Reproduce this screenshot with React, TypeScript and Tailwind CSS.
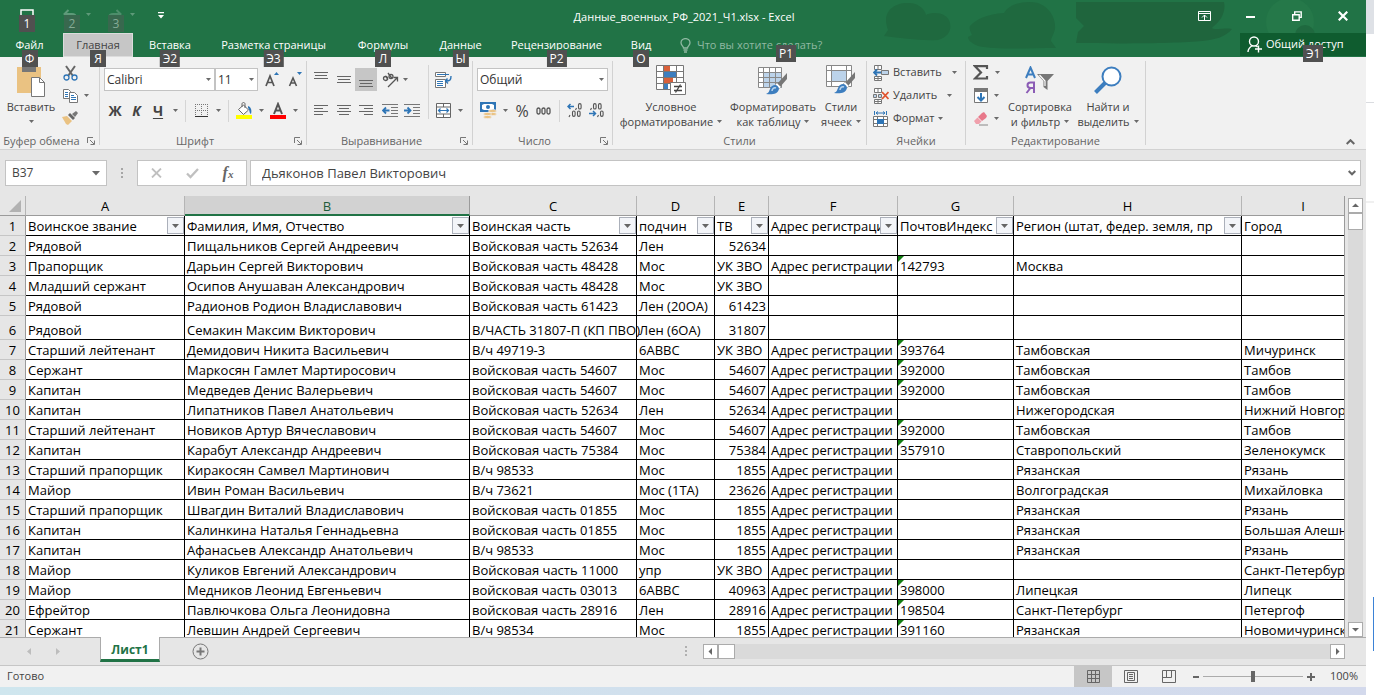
import React, { useState } from "react";

const letters = ["A", "B", "C", "D", "E", "F", "G", "H", "I"];

const headings = [
  "Воинское звание",
  "Фамилия, Имя, Отчество",
  "Воинская часть",
  "подчин",
  "ТВ",
  "Адрес регистрации",
  "ПочтовИндекс",
  "Регион (штат, федер. земля, пр",
  "Город",
];

const addr = "Адрес регистрации";

const rows: string[][] = [
  ["Рядовой", "Пищальников Сергей Андреевич", "Войсковая часть 52634", "Лен", "52634", "", "", "", ""],
  ["Прапорщик", "Дарьин Сергей Викторович", "Войсковая часть 48428", "Мос", "УК ЗВО", addr, "142793", "Москва", ""],
  ["Младший сержант", "Осипов Анушаван Александрович", "Войсковая часть 48428", "Мос", "УК ЗВО", "", "", "", ""],
  ["Рядовой", "Радионов Родион Владиславович", "Войсковая часть 61423", "Лен (20ОА)", "61423", "", "", "", ""],
  ["Рядовой", "Семакин Максим Викторович", "В/ЧАСТЬ 31807-П (КП ПВО)", "Лен (6ОА)", "31807", "", "", "", ""],
  ["Старший лейтенант", "Демидович Никита Васильевич", "В/ч 49719-3", "6АВВС", "УК ЗВО", addr, "393764", "Тамбовская", "Мичуринск"],
  ["Сержант", "Маркосян Гамлет Мартиросович", "войсковая часть 54607", "Мос", "54607", addr, "392000", "Тамбовская", "Тамбов"],
  ["Капитан", "Медведев Денис Валерьевич", "войсковая часть 54607", "Мос", "54607", addr, "392000", "Тамбовская", "Тамбов"],
  ["Капитан", "Липатников Павел Анатольевич", "Войсковая часть 52634", "Лен", "52634", addr, "", "Нижегородская", "Нижний Новгород"],
  ["Старший лейтенант", "Новиков Артур Вячеславович", "войсковая часть 54607", "Мос", "54607", addr, "392000", "Тамбовская", "Тамбов"],
  ["Капитан", "Карабут Александр Андреевич", "Войсковая часть 75384", "Мос", "75384", addr, "357910", "Ставропольский", "Зеленокумск"],
  ["Старший прапорщик", "Киракосян Самвел Мартинович", "В/ч 98533", "Мос", "1855", addr, "", "Рязанская", "Рязань"],
  ["Майор", "Ивин Роман Васильевич", "В/ч 73621", "Мос (1ТА)", "23626", addr, "", "Волгоградская", "Михайловка"],
  ["Старший прапорщик", "Швагдин Виталий Владиславович", "войсковая часть 01855", "Мос", "1855", addr, "", "Рязанская", "Рязань"],
  ["Капитан", "Калинкина Наталья Геннадьевна", "войсковая часть 01855", "Мос", "1855", addr, "", "Рязанская", "Большая Алешня"],
  ["Капитан", "Афанасьев Александр Анатольевич", "В/ч 98533", "Мос", "1855", addr, "", "Рязанская", "Рязань"],
  ["Майор", "Куликов Евгений Александрович", "Войсковая часть 11000", "упр", "УК ЗВО", addr, "", "", "Санкт-Петербург"],
  ["Майор", "Медников Леонид Евгеньевич", "войсковая часть 03013", "6АВВС", "40963", addr, "398000", "Липецкая", "Липецк"],
  ["Ефрейтор", "Павлючкова Ольга Леонидовна", "войсковая часть 28916", "Лен", "28916", addr, "198504", "Санкт-Петербург", "Петергоф"],
  ["Сержант", "Левшин Андрей Сергеевич", "В/ч 98534", "Мос", "1855", addr, "391160", "Рязанская", "Новомичуринск"],
];

const tabs = [
  { label: "Файл", tip: "Ф", width: "w-[59px] mr-1" },
  { label: "Главная", tip: "Я", width: "w-[70px]", active: true },
  { label: "Вставка", tip: "Э2", width: "w-[74px]" },
  { label: "Разметка страницы", tip: "Э3", width: "w-[133px]" },
  { label: "Формулы", tip: "Л", width: "w-[86px]" },
  { label: "Данные", tip: "Ы", width: "w-[69px]" },
  { label: "Рецензирование", tip: "Р2", width: "w-[123px]" },
  { label: "Вид", tip: "О", width: "w-[46px]" },
];

function Caret({ className = "text-[#6a6a6a]" }: { className?: string }) {
  return (
    <svg className={`shrink-0 ${className}`} width="5" height="3" viewBox="0 0 5 3" aria-hidden="true">
      <path d="M0 0h5L2.500 3z" fill="currentColor" />
    </svg>
  );
}

function KeyTip({ children, className, faded }: { children: string; className: string; faded?: boolean }) {
  return (
    <span
      className={`absolute z-10 flex h-[17px] min-w-4 items-center justify-center px-[3px] text-xs ${
        faded ? "bg-[#38684e] text-[#86ab96]" : "bg-[#505050] text-white"
      } ${className}`}
    >
      {children}
    </span>
  );
}

function IconButton({ label, className = "", children }: { label: string; className?: string; children: React.ReactNode }) {
  return (
    <button type="button" aria-label={label} className={`flex h-[23px] shrink-0 items-center justify-center ${className}`}>
      {children}
    </button>
  );
}

function DropButton({ label, className = "w-3" }: { label: string; className?: string }) {
  return (
    <IconButton label={label} className={className}>
      <Caret />
    </IconButton>
  );
}

function Group({ label, width, launcher, children }: { label: string; width: string; launcher?: boolean; children: React.ReactNode }) {
  return (
    <section aria-label={label} className={`my-1 flex shrink-0 flex-col border-r border-[#d2d2d2] ${width}`}>
      <div className="flex h-[72px] shrink-0">{children}</div>
      <div className="flex h-4 shrink-0 items-center">
        <span className={`flex-1 whitespace-nowrap text-center text-[11px] text-[#666] ${launcher ? "pr-1" : ""}`}>{label}</span>
        {launcher && (
          <button type="button" aria-label={`${label}: параметры`} className="mr-1 flex w-2 shrink-0 items-center">
            <svg width="8" height="8" viewBox="0 0 8 8" fill="none" stroke="#777" aria-hidden="true">
              <path d="M.5 6V.5H6M3 3l4 4M7.500 3.500v4h-4" />
            </svg>
          </button>
        )}
      </div>
    </section>
  );
}

function BigButton({ lines, width, children }: { lines: string[]; width: string; children: React.ReactNode }) {
  return (
    <button type="button" className={`flex shrink-0 flex-col items-center whitespace-nowrap text-[11px] leading-[15px] text-[#444] ${width}`}>
      <span className="flex h-[38px] items-center justify-center">{children}</span>
      <span>{lines[0]}</span>
      <span className="flex h-[15px] items-center gap-1">
        {lines[1]}
        <Caret />
      </span>
    </button>
  );
}

function AlignIcon({ rows: r, top = 0 }: { rows: [number, number][]; top?: number }) {
  return (
    <svg width="15" height="17" viewBox="0 0 15 17" stroke="#666" aria-hidden="true">
      {r.map(([x, w], i) => (
        <path key={i} d={`M${x} ${top + i * 3 + 0.5}h${w}`} />
      ))}
    </svg>
  );
}

function IndentIcon({ out }: { out?: boolean }) {
  return (
    <svg width="16" height="14" viewBox="0 0 16 14" fill="none" aria-hidden="true">
      <path d="M0 .5h16M9 3.500h7M9 6.500h7M9 9.500h7M0 12.500h16" stroke="#777" />
      {out ? (
        <path d="M7.500 6.500h-6M4 3.500l-3 3 3 3" stroke="#2e75b6" strokeWidth="1.800" />
      ) : (
        <path d="M0 6.500h6M3.500 3.500l3 3-3 3" stroke="#2e75b6" strokeWidth="1.800" />
      )}
    </svg>
  );
}

function DecimalIcon({ less }: { less?: boolean }) {
  return (
    <svg width="17" height="15" viewBox="0 0 17 15" fill="none" aria-hidden="true">
      <g stroke="#555" strokeWidth="1.100">
        {less ? (
          <>
            <path d="M2.500 5l-1 2M9.500 12l-1 2" />
            <rect x="4.500" y=".600" width="2.600" height="5.400" rx="1.300" />
            <rect x="9.500" y=".600" width="2.600" height="5.400" rx="1.300" />
            <rect x="11.500" y="8" width="2.600" height="5.400" rx="1.300" />
          </>
        ) : (
          <>
            <path d="M9.500 5l-1 2M3 12l-1 2" />
            <rect x="11.500" y=".600" width="2.600" height="5.400" rx="1.300" />
            <rect x="5.500" y="8" width="2.600" height="5.400" rx="1.300" />
            <rect x="10.500" y="8" width="2.600" height="5.400" rx="1.300" />
          </>
        )}
      </g>
      {less ? (
        <path d="M0 10.500h6M4 8l2.500 2.500L4 13" stroke="#2e75b6" strokeWidth="1.500" />
      ) : (
        <path d="M1 3.500h6M3.500 1L1 3.500 3.500 6" stroke="#2e75b6" strokeWidth="1.500" />
      )}
    </svg>
  );
}

function StyleBrush() {
  return (
    <>
      <path d="M29 8v6l-7 8-3-3z" fill="#777" />
      <path d="M19 18l4 4-2 2-4-4z" fill="#fff" stroke="#999" strokeWidth=".6" />
      <path d="M17 20c2 0 4 2 4 4-1 5-7 6-13 5 3-1 3-3 4-5 1-3 3-4 5-4z" fill="#3d7ebf" />
      <path d="M14 26c0-2 2-4 4-3" stroke="#b9d4ee" fill="none" strokeWidth="1.500" />
    </>
  );
}

function CellsIcon({ kind }: { kind: "insert" | "delete" | "format" }) {
  if (kind === "format") {
    return (
      <svg width="16" height="16" viewBox="0 0 16 16" fill="none" aria-hidden="true">
        <path d="M1.500 0v4M13.500 0v4M3 2h9M5 .5L3 2l2 1.500M10 .5L12 2l-2 1.500" stroke="#2e75b6" />
        <path d="M.5 5.500h14v10H.5zM4.500 5v11M10.500 5v11M0 8.500h15M0 12.500h15" stroke="#777" fill="#fff" />
        <path d="M4 8h7v5H4z" fill="#2e75b6" />
      </svg>
    );
  }
  return (
    <svg width="16" height="16" viewBox="0 0 16 16" fill="none" aria-hidden="true">
      <path d="M1.500.5h7v4h-7zM5 .5v4M1.500 11.500h7v4h-7zM5 11v5M1.500 13.500h7" stroke="#777" fill="#fff" />
      {kind === "insert" ? (
        <>
          <path d="M8.500 5.500h7v4h-7z" fill="#bcd3ea" stroke="#777" />
          <path d="M8 7.500H1M4 4.500l-3 3 3 3" stroke="#2e75b6" strokeWidth="1.800" />
        </>
      ) : (
        <>
          <path d="M.5 6.500h3v3h-3zM5.500 6.500h3v3h-3z" fill="#bcd3ea" stroke="#777" />
          <path d="M9 4l6.500 7M15.500 4L9 11" stroke="#e0532f" strokeWidth="1.800" />
        </>
      )}
    </svg>
  );
}

function SmallCommand({ icon, label, gap }: { icon: React.ReactNode; label: string; gap: string }) {
  return (
    <button type="button" className="flex h-[23px] items-center whitespace-nowrap text-[11px] text-[#444]">
      {icon}
      <span className={`ml-1 ${gap}`}>{label}</span>
      <Caret />
    </button>
  );
}

function TitleBar() {
  return (
    <header className="relative h-[57px] shrink-0 bg-[#217346] text-white">
      <svg className="absolute right-0 top-0" width="526" height="57" viewBox="0 0 526 57" aria-hidden="true">
        <path d="M46 20C46 8 58 2 70 3c10 1 15 7 16 12 8-4 22-2 24 8 2 9-4 15-12 17-18 1-36-2-54-4l4-6c-1-3-2-6-2-10z" fill="#1f693f" />
        <path d="M130 26c6-7 18-12 34-13C170 3 186 0 198 3c12 4 18 16 17 26-1 5-4 9-4 12l5 7c-28 0-58 2-78-2-8-3-10-7-10-9l4-2c-2-4-3-7-2-9z" fill="#1f693f" />
        <path d="M236 2h148c2 8-2 18-10 24-3 2-2 3 2 3 6 0 11-1 16 0-6 8-18 11-30 12-20 2-70 3-126 2l2-11 6-6-8-8z" fill="#1f653d" />
        <circle cx="450" cy="22" r="24" fill="#257849" />
        <circle cx="465" cy="35" r="10" fill="#1f693f" />
      </svg>
      <div className="relative flex h-[33px] items-start">
        <div className="flex w-[340px] shrink-0 pt-2">
          <button type="button" aria-label="Сохранить" className="relative ml-5 h-4 w-[43px]">
            <svg width="14" height="14" viewBox="0 0 14 14" fill="none" stroke="#fff" strokeWidth="1.500" aria-hidden="true">
              <path d="M1 1h12v12H1zM3.500 13V9h7v4" />
            </svg>
            <KeyTip className="-left-px top-[7px]">1</KeyTip>
          </button>
          <button type="button" aria-label="Отменить" className="relative h-4 w-[23px]">
            <svg width="15" height="14" viewBox="0 0 15 14" fill="none" stroke="#5e9a79" strokeWidth="2" aria-hidden="true">
              <path d="M5.500 1L1.500 5l4 4M2 5h7c5 0 5 6 2 8" />
            </svg>
            <KeyTip faded className="left-px top-[7px]">2</KeyTip>
          </button>
          <button type="button" aria-label="Список отмены" className="flex h-[13px] w-[21px] items-center">
            <Caret className="text-[#5e9a79]" />
          </button>
          <button type="button" aria-label="Вернуть" className="relative h-4 w-[23px]">
            <svg width="15" height="14" viewBox="0 0 15 14" fill="none" stroke="#4d8e6b" strokeWidth="2" aria-hidden="true">
              <path d="M9.500 1l4 4-4 4M13 5H6C1 5 1 11 4 13" />
            </svg>
            <KeyTip faded className="left-px top-[7px]">3</KeyTip>
          </button>
          <button type="button" aria-label="Список повтора" className="flex h-[13px] w-7 items-center">
            <Caret className="text-[#5e9a79]" />
          </button>
          <button type="button" aria-label="Настройка панели быстрого доступа" className="flex h-[15px] items-center">
            <svg width="6" height="7" viewBox="0 0 6 7" fill="#fff" aria-hidden="true">
              <path d="M0 0h6v1.300H0zM0 3h6L3 6.500z" />
            </svg>
          </button>
        </div>
        <h1 className="min-w-0 flex-1 whitespace-nowrap pt-2 text-center text-[11px] leading-[18px]">Данные_военных_РФ_2021_Ч1.xlsx - Excel</h1>
        <div className="flex w-[338px] shrink-0 items-center justify-end pt-2">
          <button type="button" aria-label="Параметры отображения ленты" className="flex h-[14px] w-12 items-center">
            <svg width="13" height="10" viewBox="0 0 13 10" fill="none" stroke="#fff" aria-hidden="true">
              <path d="M.5.5h12v9H.5zM0 2.500h13M6.500 9V4M4 6.500L6.500 4 9 6.500" />
            </svg>
          </button>
          <button type="button" aria-label="Свернуть" className="flex h-4 w-[46px] items-center pt-0.5">
            <svg width="9" height="2" aria-hidden="true">
              <path d="M0 0h9v2H0z" fill="#fff" />
            </svg>
          </button>
          <button type="button" aria-label="Свернуть в окно" className="flex h-4 w-[46px] items-center">
            <svg width="10" height="10" viewBox="0 0 10 10" fill="none" stroke="#fff" strokeWidth="1.400" aria-hidden="true">
              <path d="M.7 3.700h6.500v5.500H.7zM2.700 3.500V.9h6.500v5.500H7.500" />
            </svg>
          </button>
          <button type="button" aria-label="Закрыть" className="flex h-4 w-7 items-center">
            <svg width="10" height="10" viewBox="0 0 10 10" stroke="#fff" strokeWidth="2.200" aria-hidden="true">
              <path d="M.7.7l8.600 8.600M9.300.7L.7 9.300" />
            </svg>
          </button>
        </div>
      </div>
      <nav aria-label="Вкладки ленты" className="relative flex h-6 text-[11px]">
        {tabs.map((t) => (
          <button
            key={t.label}
            type="button"
            className={`relative shrink-0 whitespace-nowrap text-center ${t.width} ${
              t.active ? "bg-[#c6c6c6] text-[#444] outline outline-1 -outline-offset-1 outline-[#dcdcdc]" : ""
            }`}
          >
            {t.label}
            <KeyTip className="left-1/2 top-[17px] -translate-x-1/2">{t.tip}</KeyTip>
          </button>
        ))}
        <div className="relative ml-4 flex items-center gap-1.5 text-[#90b9a3]">
          <svg width="11" height="15" viewBox="0 0 11 15" fill="none" stroke="currentColor" strokeWidth="1.300" aria-hidden="true">
            <path d="M3.500 10C3.500 8 1 7.500 1 4.800a4.500 4.200 0 0 1 9 0C10 7.500 7.500 8 7.500 10zM3.500 12h4M4 14h3" />
          </svg>
          <input
            aria-label="Что вы хотите сделать?"
            placeholder="Что вы хотите сделать?"
            className="w-40 bg-transparent outline-none placeholder:text-[#90b9a3]"
          />
          <KeyTip className="left-24 top-3">Р1</KeyTip>
        </div>
        <button type="button" className="relative ml-auto flex h-[23px] w-[126px] items-center gap-1 whitespace-nowrap bg-[#0f5c2f] pl-[7px]">
          <svg width="15" height="17" viewBox="0 0 15 17" fill="none" stroke="#fff" strokeWidth="1.400" aria-hidden="true">
            <circle cx="7" cy="5.500" r="4.500" />
            <path d="M1 16c0-3 2-5 4.500-6.500M8.500 9.500l2 1.500M8 13h7M11.500 9.500v7" />
          </svg>
          Общий доступ
          <KeyTip className="left-[63px] top-3">Э1</KeyTip>
        </button>
      </nav>
    </header>
  );
}

function Combo({ label, value, width }: { label: string; value: string; width: string }) {
  return (
    <div className={`relative h-[23px] shrink-0 ${width}`}>
      <select aria-label={label} className="block h-full w-full appearance-none border border-[#c3c3c3] bg-white pl-0.5 text-xs text-[#333] outline-none">
        <option>{value}</option>
      </select>
      <span className="pointer-events-none absolute inset-y-0 right-1 flex items-center">
        <Caret />
      </span>
    </div>
  );
}

function Divider() {
  return <span className="mx-1 h-[22px] w-px shrink-0 bg-[#d5d5d5]" />;
}

function Ribbon() {
  return (
    <div className="flex h-[93px] shrink-0 border-b border-[#d2d2d2] bg-[#f1f1f1] text-[#444]">
      <Group label="Буфер обмена" width="w-[100px]" launcher>
        <BigButton lines={["Вставить", ""]} width="w-[62px]">
          <svg width="30" height="36" viewBox="0 0 30 36" aria-hidden="true">
            <path d="M1 5h24v26H1z" fill="#eac282" />
            <path d="M10 1h7v4h3v5H6V5h4z" fill="#777" />
            <path d="M15.500 15.500h8l5 5v14h-13z" fill="#fff" stroke="#777" />
            <path d="M23.500 15.500v5h5" fill="none" stroke="#777" />
          </svg>
        </BigButton>
        <div className="flex flex-col">
          <IconButton label="Вырезать" className="w-4">
            <svg width="15" height="16" viewBox="0 0 15 16" fill="none" aria-hidden="true">
              <path d="M3 1l7 10M12 1L5 11" stroke="#666" strokeWidth="2" />
              <circle cx="3.500" cy="12.500" r="2.500" stroke="#2e75b6" strokeWidth="1.300" />
              <circle cx="11.500" cy="12.500" r="2.500" stroke="#2e75b6" strokeWidth="1.300" />
            </svg>
          </IconButton>
          <div className="flex">
            <IconButton label="Копировать" className="w-4">
              <svg width="15" height="14" viewBox="0 0 15 14" fill="#fff" stroke="#777" aria-hidden="true">
                <path d="M.5.5h5l2 2v7h-7z" />
                <path d="M6.500 3.500h5l3 3v7h-8z" />
                <path d="M2 3.500h3M2 5.500h3M2 7.500h3M8 6.500h3M8 8.500h5M8 10.500h5" stroke="#2e75b6" />
              </svg>
            </IconButton>
            <DropButton label="Варианты копирования" className="w-4" />
          </div>
          <IconButton label="Формат по образцу" className="w-4">
            <svg width="16" height="15" viewBox="0 0 16 15" aria-hidden="true">
              <path d="M0 6l5-1 5 5-4 4-2-1z" fill="#eac282" />
              <path d="M6 4l2-2 5 5-2 2z" fill="#666" />
              <path d="M10 3l4-3 2 2-3 4z" fill="#777" />
            </svg>
          </IconButton>
        </div>
      </Group>

      <Group label="Шрифт" width="w-[207px]" launcher>
        <div className="flex flex-col gap-2 pl-1 pt-[7px]">
          <div className="flex">
            <Combo label="Шрифт" value="Calibri" width="w-[111px]" />
            <Combo label="Размер шрифта" value="11" width="w-[43px]" />
            <IconButton label="Увеличить размер" className="ml-0.5 w-[23px]">
              <svg width="14" height="15" viewBox="0 0 14 15" fill="none" aria-hidden="true">
                <path d="M1 14L5 4l4 10M2.500 10.500h5" stroke="#555" strokeWidth="1.700" />
                <path d="M9 3h5l-2.500-3z" fill="#2e75b6" />
              </svg>
            </IconButton>
            <IconButton label="Уменьшить размер" className="w-[23px]">
              <svg width="14" height="15" viewBox="0 0 14 15" fill="none" aria-hidden="true">
                <path d="M1.500 14L5 6l3.500 8M3 11h4" stroke="#555" strokeWidth="1.600" />
                <path d="M9 0h5l-2.500 3z" fill="#2e75b6" />
              </svg>
            </IconButton>
          </div>
          <div className="flex items-center text-sm font-bold">
            <IconButton label="Полужирный" className="w-[22px]">Ж</IconButton>
            <IconButton label="Курсив" className="w-[21px] italic">К</IconButton>
            <IconButton label="Подчеркнутый" className="w-[22px] underline underline-offset-2">Ч</IconButton>
            <DropButton label="Вид подчеркивания" />
            <Divider />
            <IconButton label="Границы" className="w-[22px]">
              <svg width="13" height="13" viewBox="0 0 13 13" fill="none" stroke="#777" aria-hidden="true">
                <path d="M.5 0v12M6.500 0v12M12.500 0v12M0 .5h13M0 6.500h13" strokeDasharray="1 1" />
                <path d="M0 12.500h13" stroke="#333" />
              </svg>
            </IconButton>
            <DropButton label="Виды границ" />
            <Divider />
            <IconButton label="Цвет заливки" className="w-[22px]">
              <svg width="17" height="17" viewBox="0 0 17 17" fill="none" aria-hidden="true">
                <path d="M2.500 7.500l5-4.500 5 5-5 4.500z" fill="#fff" stroke="#666" />
                <path d="M6 5V2c0-2 3-2 3 0v4" stroke="#666" />
                <path d="M12 4c3 1 4 4 3 8-2-1-1-4-3-6z" fill="#2e75b6" />
                <path d="M0 13h16v4H0z" fill="#ff0" />
              </svg>
            </IconButton>
            <DropButton label="Выбор заливки" />
            <IconButton label="Цвет текста" className="w-[22px]">
              <svg width="16" height="17" viewBox="0 0 16 17" fill="none" aria-hidden="true">
                <path d="M4 12L8 2l4 10M5.500 8.500h5" stroke="#555" strokeWidth="2" />
                <path d="M0 13h16v4H0z" fill="#f00" />
              </svg>
            </IconButton>
            <DropButton label="Выбор цвета текста" />
          </div>
        </div>
      </Group>

      <Group label="Выравнивание" width="w-[166px]" launcher>
        <div className="flex w-[121px] flex-col gap-2 pl-[3px] pt-[7px]">
          <div className="flex">
            <IconButton label="По верхнему краю" className="w-[23px]">
              <AlignIcon top={1} rows={[[0, 14], [1, 12], [0, 14]]} />
            </IconButton>
            <IconButton label="По середине" className="w-[22px]">
              <AlignIcon top={5} rows={[[0, 14], [1, 12], [0, 14]]} />
            </IconButton>
            <IconButton label="По нижнему краю" className="w-[22px] bg-[#c6c6c6]">
              <AlignIcon top={9} rows={[[0, 14], [1, 12], [0, 14]]} />
            </IconButton>
            <IconButton label="Ориентация" className="ml-0.5 w-[22px]">
              <svg width="17" height="16" viewBox="0 0 17 16" fill="none" stroke="#555" strokeWidth="1.300" aria-hidden="true">
                <circle cx="3.500" cy="6.500" r="2" />
                <path d="M3.500 3.800L6 7.500M6 1l4 5.500" />
                <circle cx="9" cy="4.500" r="2" />
                <path d="M6 15L15 6M11.500 5.500H15.500V9.500" />
              </svg>
            </IconButton>
            <DropButton label="Варианты ориентации" className="w-2" />
          </div>
          <div className="flex">
            <IconButton label="По левому краю" className="w-[23px]">
              <AlignIcon top={3} rows={[[0, 14], [0, 9], [0, 14], [0, 9]]} />
            </IconButton>
            <IconButton label="По центру" className="w-[22px]">
              <AlignIcon top={3} rows={[[0, 14], [2, 10], [0, 14], [2, 10]]} />
            </IconButton>
            <IconButton label="По правому краю" className="w-[22px]">
              <AlignIcon top={3} rows={[[0, 14], [5, 9], [0, 14], [5, 9]]} />
            </IconButton>
            <IconButton label="Уменьшить отступ" className="ml-0.5 w-[22px]">
              <IndentIcon out />
            </IconButton>
            <IconButton label="Увеличить отступ" className="w-[22px]">
              <IndentIcon />
            </IconButton>
          </div>
        </div>
        <span className="mt-1 h-[54px] w-px bg-[#d5d5d5]" />
        <div className="flex flex-col gap-2 pl-[3px] pt-[7px]">
          <IconButton label="Перенести текст" className="w-[23px]">
            <svg width="17" height="16" viewBox="0 0 17 16" fill="none" aria-hidden="true">
              <path d="M.5.500h10v4H.5zM.5 7.500h10v8H.5z" fill="#fff" stroke="#777" />
              <path d="M2 2.500h12M2 9.500h6M2 11.500h6M2 13.500h6" stroke="#2e75b6" />
              <path d="M16 4c0 4-1 5-5 5M12.500 6.500L10.500 9l2.500 2.500" stroke="#2e75b6" strokeWidth="1.400" />
            </svg>
          </IconButton>
          <div className="flex">
            <IconButton label="Объединить и поместить в центре" className="w-[23px]">
              <svg width="15" height="15" viewBox="0 0 15 15" fill="none" aria-hidden="true">
                <path d="M.5.5h14v14H.5zM.5 4h14M.5 11h14M7.500 0v4M7.500 11v4" fill="#fff" stroke="#666" />
                <path d="M2 7.500h11M4.500 5.500l-2 2 2 2M10.500 5.500l2 2-2 2" stroke="#2e75b6" strokeWidth="1.200" />
              </svg>
            </IconButton>
            <DropButton label="Варианты объединения" className="w-2.5" />
          </div>
        </div>
      </Group>

      <Group label="Число" width="w-[140px]" launcher>
        <div className="flex flex-col gap-2 pl-1 pt-[7px]">
          <Combo label="Числовой формат" value="Общий" width="w-[131px]" />
          <div className="flex items-center">
            <IconButton label="Финансовый формат" className="w-[22px]">
              <svg width="17" height="17" viewBox="0 0 17 17" aria-hidden="true">
                <path d="M0 0h16v10H0z" fill="#2e75b6" />
                <path d="M2 3l2-1h8l2 1v4l-2 1H4L2 7z" fill="#fff" />
                <circle cx="8" cy="5" r="2" fill="#2e75b6" />
                <g fill="#eac282" stroke="#f1f1f1" strokeWidth=".7">
                  <ellipse cx="12.500" cy="9" rx="4" ry="1.600" />
                  <ellipse cx="12.500" cy="12" rx="4" ry="1.600" />
                  <ellipse cx="7.500" cy="12" rx="4" ry="1.600" />
                  <ellipse cx="7.500" cy="15" rx="4" ry="1.600" />
                </g>
              </svg>
            </IconButton>
            <DropButton label="Выбор валюты" />
            <IconButton label="Процентный формат" className="w-[22px] text-base">%</IconButton>
            <IconButton label="Формат с разделителями" className="w-[22px]">
              <svg width="16" height="8" viewBox="0 0 16 8" fill="none" stroke="#555" strokeWidth="1.300" aria-hidden="true">
                <rect x="1" y="1" width="3" height="6" rx="1.500" />
                <rect x="6" y="1" width="3" height="6" rx="1.500" />
                <rect x="11" y="1" width="3" height="6" rx="1.500" />
              </svg>
            </IconButton>
            <Divider />
            <IconButton label="Увеличить разрядность" className="w-[22px]">
              <DecimalIcon />
            </IconButton>
            <IconButton label="Уменьшить разрядность" className="w-[22px]">
              <DecimalIcon less />
            </IconButton>
          </div>
        </div>
      </Group>

      <Group label="Стили" width="w-[254px]">
        <BigButton lines={["Условное", "форматирование"]} width="w-[116px]">
          <svg width="30" height="32" viewBox="0 0 30 32" fill="none" aria-hidden="true">
            <path d="M.5 1.500h27v24H.5z" fill="#fff" />
            <path d="M8 2h6v5H8zM8 13h9v6H8z" fill="#d9603a" />
            <path d="M8 8h12v5H8zM8 20h4v6H8z" fill="#3d7ebf" />
            <path d="M.5 1.500h27v24H.5zM7.500 1v25M20.500 1v25M0 7.500h28M0 13.500h28M0 19.500h28" stroke="#777" />
            <path d="M14.500 18.500h15v12h-15z" fill="#fff" stroke="#777" />
            <path d="M18 22.500h8M18 26.500h8M24.500 20.500l-5 8" stroke="#444" strokeWidth="1.300" />
          </svg>
        </BigButton>
        <BigButton lines={["Форматировать", "как таблицу"]} width="w-[88px]">
          <svg width="30" height="31" viewBox="0 0 30 31" fill="none" aria-hidden="true">
            <path d="M.5 2.500h23v20H.5z" fill="#fff" />
            <path d="M6 7h18v16H6z" fill="#bcd3ea" />
            <path d="M.5 2.500h23v20H.5zM5.500 2v20M11.500 2v20M17.500 2v20M0 7.500h24M0 12.500h24M0 17.500h24" stroke="#888" />
            <StyleBrush />
          </svg>
        </BigButton>
        <BigButton lines={["Стили", "ячеек"]} width="w-12">
          <svg width="30" height="32" viewBox="0 0 30 32" fill="none" aria-hidden="true">
            <path d="M.5 1.500h25v21H.5z" fill="#fff" />
            <path d="M.5 1.500h25v21H.5zM5.500 1v22M20.500 1v22M0 6.500h26M0 17.500h26" stroke="#888" />
            <path d="M6 7h14v10H6z" fill="#bcd3ea" />
            <StyleBrush />
          </svg>
        </BigButton>
      </Group>

      <Group label="Ячейки" width="w-[99px]">
        <div className="flex flex-col pl-1.5">
          <SmallCommand icon={<CellsIcon kind="insert" />} label="Вставить" gap="mr-2.5" />
          <SmallCommand icon={<CellsIcon kind="delete" />} label="Удалить" gap="mr-2.5" />
          <SmallCommand icon={<CellsIcon kind="format" />} label="Формат" gap="mr-1" />
        </div>
      </Group>

      <Group label="Редактирование" width="w-[180px]">
        <div className="flex w-[38px] flex-col pl-1">
          <div className="flex">
            <IconButton label="Сумма" className="w-[21px]">
              <svg width="16" height="15" viewBox="0 0 16 15" fill="none" stroke="#555" strokeWidth="2.200" aria-hidden="true">
                <path d="M14 4V1.200H2L8 7.500 2 13.500h12V11" />
              </svg>
            </IconButton>
            <DropButton label="Функции" />
          </div>
          <div className="flex">
            <IconButton label="Заполнить" className="w-[21px]">
              <svg width="14" height="15" viewBox="0 0 14 15" fill="none" aria-hidden="true">
                <path d="M.5.500h13v14H.5z" fill="#fff" stroke="#777" />
                <path d="M0 0h14v4H0z" fill="#777" />
                <path d="M7 5v8M3.500 9L7 12.500 10.500 9" stroke="#2e75b6" strokeWidth="2" />
              </svg>
            </IconButton>
            <DropButton label="Варианты заполнения" className="w-2.5" />
          </div>
          <div className="flex">
            <IconButton label="Очистить" className="w-[21px]">
              <svg width="14" height="14" viewBox="0 0 14 14" aria-hidden="true">
                <path d="M8 1l2-1 3 4-1 2-4 3-4-4z" fill="#e8788a" />
                <path d="M3.500 5.500l4 4L5 12H2L0 9z" fill="#f0a0ac" />
                <path d="M5 13h9" stroke="#888" />
              </svg>
            </IconButton>
            <DropButton label="Варианты очистки" className="w-2.5" />
          </div>
        </div>
        <BigButton lines={["Сортировка", "и фильтр"]} width="w-[72px]">
          <svg width="30" height="28" viewBox="0 0 30 28" fill="none" aria-hidden="true">
            <path d="M1 12L5.500 1.500 10 12M2.500 8.500h6" stroke="#3d7ebf" strokeWidth="2" />
            <path d="M9 27V16.500H5.500c-4 0-4 5.500 0 5.500H9M5.500 22L1.500 27" stroke="#8b5cb5" strokeWidth="2" />
            <path d="M12 8h17l-6.500 7v9l-4-3v-6z" fill="#777" />
            <path d="M14.500 9l5.500 6v5" stroke="#fff" strokeWidth="1.200" />
          </svg>
        </BigButton>
        <BigButton lines={["Найти и", "выделить"]} width="w-16">
          <svg width="28" height="28" viewBox="0 0 28 28" fill="none" stroke="#3d7ebf" aria-hidden="true">
            <circle cx="17.500" cy="10.500" r="9" fill="#fff" strokeWidth="2" />
            <path d="M11 17L1.500 26.500" strokeWidth="4" />
          </svg>
        </BigButton>
      </Group>
      <button type="button" aria-label="Свернуть ленту" className="mb-1 ml-auto mr-2.5 flex w-2.5 items-end">
        <svg width="9" height="6" viewBox="0 0 9 6" fill="none" stroke="#666" strokeWidth="2" aria-hidden="true">
          <path d="M.7 5l3.800-3.800L8.300 5" />
        </svg>
      </button>
    </div>
  );
}

function FormulaBar() {
  const [text, setText] = useState("Дьяконов Павел Викторович");
  const [cell, setCell] = useState("B37");
  return (
    <div className="flex shrink-0 items-center bg-[#e6e6e6] px-[5px] py-2.5 text-[#444]">
      <div className="flex h-[26px] w-[102px] shrink-0 items-center border border-[#c3c3c3] bg-white pr-1.5">
        <input aria-label="Имя ячейки" value={cell} onChange={(e) => setCell(e.target.value)} className="w-full min-w-0 bg-transparent pl-1.5 text-xs outline-none" />
        <svg className="shrink-0" width="8" height="5" aria-hidden="true">
          <path d="M0 0h8L4 4.500z" fill="#6a6a6a" />
        </svg>
      </div>
      <svg className="mx-3.5 shrink-0" width="2" height="11" aria-hidden="true">
        <path d="M0 0h2v2H0zM0 4h2v2H0zM0 8h2v2H0z" fill="#a6a6a6" />
      </svg>
      <div className="flex h-[26px] w-[110px] shrink-0 items-center border border-[#c3c3c3] bg-white">
        <button type="button" aria-label="Отмена" className="flex w-9 justify-center">
          <svg width="11" height="10" viewBox="0 0 11 10" stroke="#c0c0c0" strokeWidth="1.800" aria-hidden="true">
            <path d="M1 .5l9 9M10 .5l-9 9" />
          </svg>
        </button>
        <button type="button" aria-label="Ввод" className="flex w-9 justify-center">
          <svg width="13" height="11" viewBox="0 0 13 11" fill="none" stroke="#c0c0c0" strokeWidth="2.300" aria-hidden="true">
            <path d="M1 5.500L4.500 9 12 1" />
          </svg>
        </button>
        <button type="button" aria-label="Вставить функцию" className="w-9 text-center font-['Liberation_Serif',serif] text-base font-bold italic leading-5 text-[#666]">
          f<span className="text-[11px]">x</span>
        </button>
      </div>
      <div className="ml-[3px] flex h-[26px] min-w-0 flex-1 items-center border border-[#c3c3c3] bg-white pr-1">
        <input aria-label="Строка формул" value={text} onChange={(e) => setText(e.target.value)} className="min-w-0 flex-1 bg-transparent pl-[11px] pt-px text-[13px] outline-none" />
        <svg className="shrink-0" width="8" height="6" viewBox="0 0 8 6" fill="none" stroke="#666" strokeWidth="2" aria-hidden="true">
          <path d="M.7 1L4 4.300 7.300 1" />
        </svg>
      </div>
    </div>
  );
}

function FilterButton({ name }: { name: string }) {
  return (
    <button type="button" aria-label={`Фильтр: ${name}`} className="absolute right-0 top-px flex h-[17px] w-[17px] items-center justify-center border border-[#abb0ba] bg-[#f3f5f9]">
      <svg width="7" height="4" aria-hidden="true">
        <path d="M0 0h7L3.500 4z" fill="#666" />
      </svg>
    </button>
  );
}

function Sheet() {
  return (
    <div className="min-w-0 flex-1 overflow-hidden border-r border-[#9b9b9b] bg-white">
      <table className="w-full table-fixed border-separate border-spacing-0 whitespace-nowrap text-[13px] leading-[17px] text-black">
        <colgroup>
          <col className="w-[26px]" />
          <col className="w-[159px]" />
          <col className="w-[285px]" />
          <col className="w-[167px]" />
          <col className="w-[78px]" />
          <col className="w-[54px]" />
          <col className="w-[129px]" />
          <col className="w-[116px]" />
          <col className="w-[228px]" />
          <col />
        </colgroup>
        <thead>
          <tr className="bg-[#e6e6e6]">
            <td className="border-b border-r border-[#9b9b9b] border-r-[#b5b5b5] p-0">
              <svg className="ml-auto mr-1" width="12" height="12" aria-hidden="true">
                <path d="M12 0v12H0z" fill="#b2b2b2" />
              </svg>
            </td>
            {letters.map((l) => (
              <th
                key={l}
                scope="col"
                className={`pb-0 pr-0 pt-0.5 font-normal ${
                  l === "B"
                    ? "border-b-2 border-r border-b-[#217346] border-r-[#9b9b9b] bg-[#d2d2d2] pl-0 leading-4 text-[#1f5c3a]"
                    : l === "I"
                      ? "border-b border-[#9b9b9b] pl-5"
                      : "border-b border-r border-[#9b9b9b] border-r-[#b5b5b5] pl-0"
                }`}
              >
                {l}
              </th>
            ))}
          </tr>
          <tr>
            <th scope="row" className="border-b border-r border-b-[#c6c6c6] border-r-[#9b9b9b] bg-[#e6e6e6] px-0 pb-0 pt-0.5 font-normal">1</th>
            {headings.map((h, i) => (
              <th key={h} scope="col" className={`relative overflow-hidden border-b border-black pb-0 pl-0.5 pr-0 pt-0.5 text-left font-normal ${i < 8 ? "border-r" : ""}`}>
                {h}
                {i < 8 && <FilterButton name={h} />}
              </th>
            ))}
          </tr>
        </thead>
        <tbody>
          {rows.map((r, n) => (
            <tr key={n}>
              <th scope="row" className="border-b border-r border-b-[#c6c6c6] border-r-[#9b9b9b] bg-[#e6e6e6] px-0 pb-0 pt-0.5 align-bottom font-normal">{n + 2}</th>
              {r.map((v, i) => (
                <td
                  key={i}
                  className={`relative border-b border-black px-0.5 pb-0 align-bottom ${n === 4 ? "pt-1.5" : "pt-0.5"} ${i < 8 ? "border-r" : ""} ${
                    i === 2 ? "overflow-visible" : "overflow-hidden"
                  } ${i === 4 && /^\d+$/.test(v) ? "text-right" : ""}`}
                >
                  {v}
                  {i === 6 && v && (
                    <svg className="absolute left-0 top-0" width="6" height="6" aria-hidden="true">
                      <path d="M0 0h6L0 6z" fill="#107c10" />
                    </svg>
                  )}
                </td>
              ))}
            </tr>
          ))}
        </tbody>
      </table>
    </div>
  );
}

function ScrollArrow({ label, d }: { label: string; d: string }) {
  return (
    <button type="button" aria-label={label} className="flex h-[15px] w-[15px] shrink-0 items-center justify-center border border-[#ababab] bg-white">
      <svg width="7" height="7" viewBox="0 0 7 7" aria-hidden="true">
        <path d={d} fill="#666" />
      </svg>
    </button>
  );
}

function SheetBar() {
  return (
    <div className="flex h-7 shrink-0 border-t border-[#ababab] bg-[#e6e6e6]">
      <button type="button" aria-label="Предыдущий лист" className="ml-6 flex w-7 items-center">
        <svg width="8" height="8" className="ml-0.5" aria-hidden="true">
          <path d="M5 0v7L1 3.500z" fill="#bdbdbd" />
        </svg>
      </button>
      <button type="button" aria-label="Следующий лист" className="flex w-12 items-center">
        <svg width="8" height="8" className="ml-0.5" aria-hidden="true">
          <path d="M2 0v7l4-3.500z" fill="#bdbdbd" />
        </svg>
      </button>
      <button type="button" className="-mt-px h-[25px] w-[60px] border-x border-b-[3px] border-x-[#ababab] border-b-[#217346] bg-white pt-1 text-xs font-bold text-[#217346]">
        Лист1
      </button>
      <button type="button" aria-label="Новый лист" className="ml-8 flex items-center">
        <svg width="17" height="17" viewBox="0 0 17 17" fill="none" stroke="#777" aria-hidden="true">
          <circle cx="8.500" cy="8.500" r="7.500" />
          <path d="M4.500 8.500h8M8.500 4.500v8" strokeWidth="2" />
        </svg>
      </button>
      <div className="flex flex-1 items-center justify-end pr-4">
        <svg width="2" height="11" aria-hidden="true">
          <path d="M0 0h2v2H0zM0 4h2v2H0zM0 8h2v2H0z" fill="#b0b0b0" />
        </svg>
      </div>
      <div className="mr-[21px] flex w-[47%] items-center">
        <ScrollArrow label="Прокрутить влево" d="M5 0v7L1.500 3.500z" />
        <span className="h-[15px] w-[17px] border border-[#ababab] bg-white" />
        <span className="h-[15px] flex-1 bg-[#dadada]" />
        <ScrollArrow label="Прокрутить вправо" d="M2 0v7l3.500-3.500z" />
      </div>
    </div>
  );
}

function StatusBar() {
  const [zoom, setZoom] = useState(100);
  return (
    <footer className="flex h-[22px] shrink-0 items-center border-t border-[#c6c6c6] bg-[#f1f1f1] text-[11px] text-[#444]">
      <span className="flex-1 pl-[7px]">Готово</span>
      <button type="button" aria-label="Обычный режим" className="flex h-full w-[38px] items-center justify-center bg-[#c6c6c6]">
        <svg width="13" height="13" viewBox="0 0 13 13" fill="none" stroke="#666" aria-hidden="true">
          <path d="M.5.500h12v12H.5zM4.500 0v13M8.500 0v13M0 4.500h13M0 8.500h13" />
        </svg>
      </button>
      <button type="button" aria-label="Разметка страницы" className="flex h-full w-[38px] items-center justify-center">
        <svg width="14" height="13" viewBox="0 0 14 13" fill="none" stroke="#666" aria-hidden="true">
          <path d="M.5.500h13v12H.5zM3.500 2.500h7v8h-7zM5 4.500h4M5 6.500h4M5 8.500h4" />
        </svg>
      </button>
      <button type="button" aria-label="Страничный режим" className="flex h-full w-[38px] items-center justify-center">
        <svg width="14" height="13" viewBox="0 0 14 13" fill="none" stroke="#666" aria-hidden="true">
          <path d="M.5.500h13v12H.5zM4.500 0v7.500M.5 7.500h9V0" />
        </svg>
      </button>
      <button type="button" aria-label="Уменьшить" className="ml-[5px] flex h-full w-2.5 items-center">
        <svg width="6" height="2" aria-hidden="true">
          <path d="M0 0h6v2H0z" fill="#666" />
        </svg>
      </button>
      <input
        type="range"
        aria-label="Масштаб"
        min={10}
        max={190}
        value={zoom}
        onChange={(e) => setZoom(Number(e.target.value))}
        className="h-3 w-[100px] appearance-none bg-transparent [&::-webkit-slider-runnable-track]:h-px [&::-webkit-slider-runnable-track]:bg-[#ababab] [&::-webkit-slider-thumb]:-mt-[5px] [&::-webkit-slider-thumb]:h-[11px] [&::-webkit-slider-thumb]:w-1 [&::-webkit-slider-thumb]:appearance-none [&::-webkit-slider-thumb]:bg-[#666]"
      />
      <button type="button" aria-label="Увеличить" className="ml-1 flex h-full w-[23px] items-center">
        <svg width="8" height="8" aria-hidden="true">
          <path d="M3 0h2v3h3v2H5v3H3V5H0V3h3z" fill="#666" />
        </svg>
      </button>
      <span className="w-9">{zoom}%</span>
    </footer>
  );
}

export default function App() {
  return (
    <div className="flex h-screen overflow-hidden bg-white font-['Open_Sans','Noto_Sans',sans-serif]">
      <main className="flex min-w-0 flex-1 flex-col bg-[#e6e6e6]">
        <TitleBar />
        <Ribbon />
        <FormulaBar />
        <div className="flex min-h-0 flex-1 bg-[#e6e6e6]">
          <Sheet />
          <div className="mx-[3px] flex w-[15px] shrink-0 flex-col pt-0.5">
            <ScrollArrow label="Прокрутить вверх" d="M0 5h7L3.500 1.500z" />
            <span className="h-[17px] border border-[#ababab] bg-white" />
            <span className="flex-1 bg-[#dadada]" />
            <ScrollArrow label="Прокрутить вниз" d="M0 2h7L3.500 5.500z" />
          </div>
        </div>
        <SheetBar />
        <StatusBar />
        <div className="h-2 shrink-0 bg-linear-to-r from-[#cfe6ee] to-[#d3d9ec]" />
      </main>
      <div className="flex w-2 shrink-0 flex-col" aria-hidden="true">
        <span className="h-[34px] bg-[#dee1e6]" />
        <span className="h-[69px] border-b border-[#dadce0]" />
        <span className="h-[100px] border-b-2 border-[#f0f0f0]" />
        <span className="flex-1" />
        <span className="mb-11 ml-auto h-[54px] w-px bg-[#3b82d6]" />
      </div>
    </div>
  );
}
